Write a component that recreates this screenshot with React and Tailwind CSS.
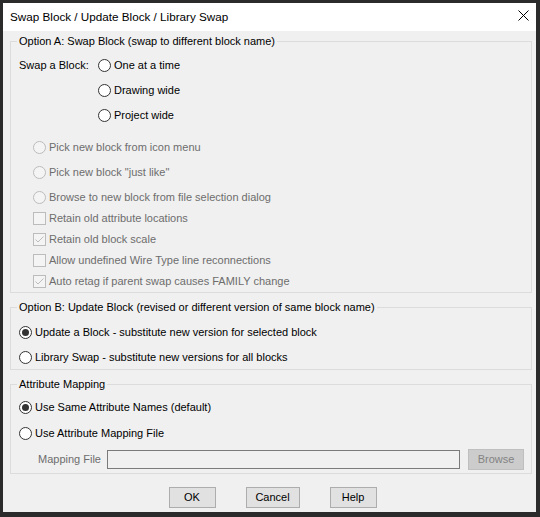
import React from "react";

const FONT = { fontFamily: '"Segoe UI", "Liberation Sans", Arial, sans-serif' };

function Radio({ checked, disabled }) {
  return (
    <span
      className={`relative inline-flex items-center justify-center w-[13px] h-[13px] rounded-full border shrink-0 ${
        disabled ? "border-[#bcbcbc] bg-[#f4f4f4]" : "border-[#333333] bg-white"
      }`}
    >
      {checked && <span className="w-[7px] h-[7px] rounded-full bg-[#333333]"></span>}
    </span>
  );
}

function Check({ checked }) {
  return (
    <span className="inline-flex items-center justify-center w-[13px] h-[13px] border border-[#bcbcbc] bg-[#f4f4f4] shrink-0">
      {checked && (
        <svg width="11" height="11" viewBox="0 0 11 11">
          <path d="M1.5 5.5 L4 8 L9.5 2.5" fill="none" stroke="#bcbcbc" strokeWidth="1" />
        </svg>
      )}
    </span>
  );
}

function Row({ children, className = "" }) {
  return <div className={`flex items-center h-[21px] ${className}`}>{children}</div>;
}

function Group({ title, className = "", children }) {
  return (
    <fieldset className={`border border-[#dcdcdc] ${className}`}>
      <legend className="ml-[6px] px-[2px] h-[16px] leading-[16px] text-[11px] text-black">{title}</legend>
      {children}
    </fieldset>
  );
}

function Button({ children, className = "" }) {
  return (
    <button className={`h-[21px] border border-[#adadad] bg-[#e1e1e1] text-[11px] text-black leading-none ${className}`}>
      {children}
    </button>
  );
}

export default function App() {
  const swapModes = ["One at a time", "Drawing wide", "Project wide"];
  const pickOptions = [
    "Pick new block from icon menu",
    'Pick new block "just like"',
    "Browse to new block from file selection dialog",
  ];
  const checks = [
    { label: "Retain old attribute locations", checked: false },
    { label: "Retain old block scale", checked: true },
    { label: "Allow undefined Wire Type line reconnections", checked: false },
    { label: "Auto retag if parent swap causes FAMILY change", checked: true },
  ];

  return (
    <div className="w-[540px] h-[517px] bg-[#2b2b2b] pt-[3px] pl-[3px] pr-[4px] pb-[5px]" style={FONT}>
      <div className="flex flex-col h-full bg-[#f0f0f0]">
        {/* Title bar */}
        <div className="flex items-start justify-between h-[28px] bg-white pl-[7px] pr-[7px]">
          <span className="mt-[6px] text-[11.7px] leading-[16px] text-black">
            Swap Block / Update Block / Library Swap
          </span>
          <svg className="mt-[7px]" width="11" height="11" viewBox="0 0 11 11">
            <path d="M0.5 0.5 L10.5 10.5 M10.5 0.5 L0.5 10.5" stroke="#000" strokeWidth="1" />
          </svg>
        </div>

        {/* Body */}
        <div className="flex flex-col pl-[7px] pr-[4px] text-[11px] text-black">
          {/* Option A */}
          <Group title="Option A: Swap Block (swap to different block name)" className="mt-[2px]">
            <div className="flex mt-[6px] pl-[8px]">
              <div className="w-[79px] h-[21px] flex items-center">Swap a Block:</div>
              <div className="flex flex-col gap-[4px]">
                {swapModes.map((m) => (
                  <Row key={m}>
                    <Radio />
                    <span className="ml-[3px]">{m}</span>
                  </Row>
                ))}
              </div>
            </div>
            <div className="flex flex-col gap-[4px] mt-[11px] pl-[22px] text-[#6d6d6d]">
              {pickOptions.map((p) => (
                <Row key={p}>
                  <Radio disabled />
                  <span className="ml-[3px]">{p}</span>
                </Row>
              ))}
            </div>
            <div className="flex flex-col pl-[22px] text-[#6d6d6d]">
              {checks.map((c) => (
                <Row key={c.label}>
                  <Check checked={c.checked} />
                  <span className="ml-[3px]">{c.label}</span>
                </Row>
              ))}
            </div>
          </Group>

          {/* Option B */}
          <Group title="Option B: Update Block (revised or different version of same block name)" className="mt-[6px]">
            <div className="flex flex-col gap-[4px] mt-[7px] pl-[8px] pb-[1px]">
              <Row>
                <Radio checked />
                <span className="ml-[3px]">Update a Block - substitute new version for selected block</span>
              </Row>
              <Row>
                <Radio />
                <span className="ml-[3px]">Library Swap - substitute new versions for all blocks</span>
              </Row>
            </div>
          </Group>

          {/* Attribute Mapping */}
          <Group title="Attribute Mapping" className="mt-[6px]">
            <div className="flex flex-col gap-[5px] mt-[5px] pl-[8px]">
              <Row>
                <Radio checked />
                <span className="ml-[3px]">Use Same Attribute Names (default)</span>
              </Row>
              <Row>
                <Radio />
                <span className="ml-[3px]">Use Attribute Mapping File</span>
              </Row>
            </div>
            <div className="flex items-center h-[22px] mt-[4px] mb-[3px] pl-[27px]">
              <span className="w-[69px] text-[#6d6d6d]">Mapping File</span>
              <div className="w-[353px] h-[19px] border border-[#7a7a7a] bg-[#f0f0f0]"></div>
              <button className="ml-[8px] w-[56px] h-[21px] border border-[#bfbfbf] bg-[#cccccc] text-[11px] text-[#838383] leading-none">
                Browse
              </button>
            </div>
          </Group>

          {/* Buttons */}
          <div className="flex justify-center gap-[30px] mt-[13px] pl-[3px]">
            <Button className="w-[47px]">OK</Button>
            <Button className="w-[54px]">Cancel</Button>
            <Button className="w-[47px]">Help</Button>
          </div>
        </div>
      </div>
    </div>
  );
}
